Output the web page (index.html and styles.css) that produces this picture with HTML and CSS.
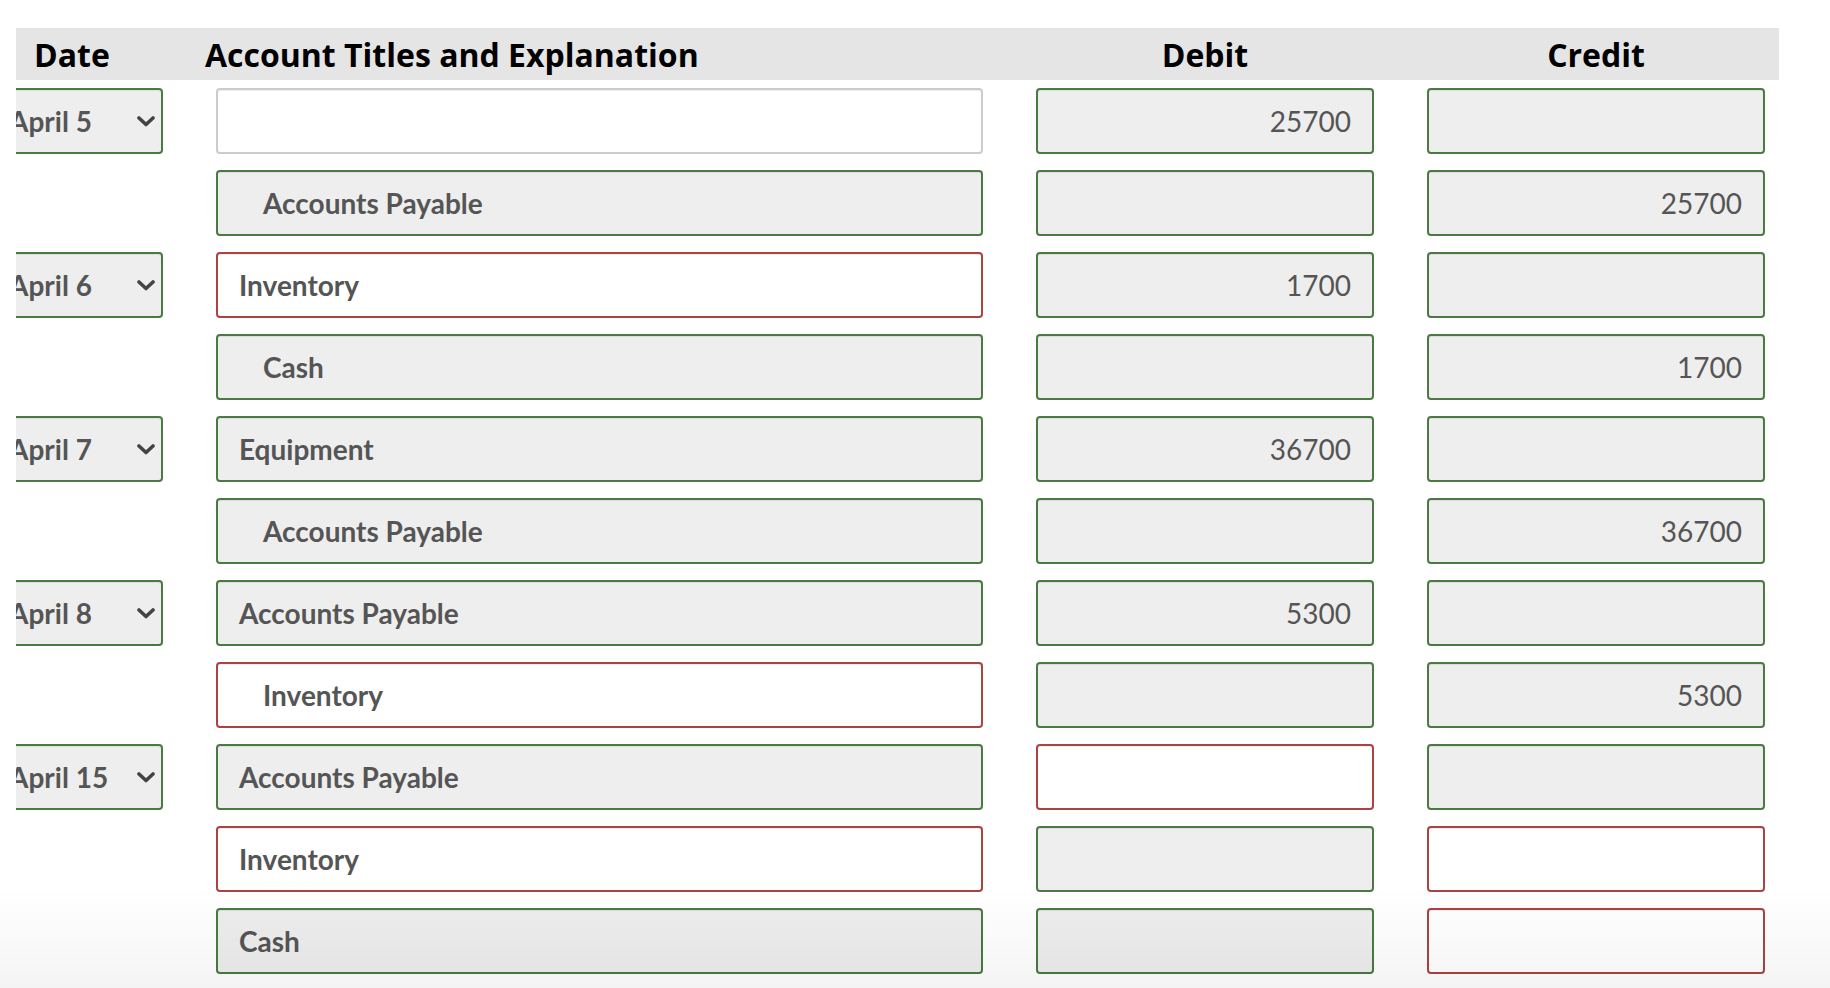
FILE: index.html
```html
<!DOCTYPE html>
<html lang="en">
<head>
<meta charset="utf-8">
<title>Journal Entries</title>
<link rel="stylesheet" href="styles.css">
</head>
<body>
<div class="page">
  <div class="journal">
    <div class="head">
      <div class="th th-date">Date</div>
      <div class="th th-account">Account Titles and Explanation</div>
      <div class="th th-center">Debit</div>
      <div class="th th-center">Credit</div>
    </div>

    <div class="rows">
      <!-- April 5 -->
      <div class="row">
        <div class="date-clip"><div class="select ok"><span>April 5</span><svg class="chev" viewBox="0 0 18 11"><polyline points="2,2 9,8.5 16,2"/></svg></div></div>
        <div class="field plain"></div>
        <div class="field ok num">25700</div>
        <div class="field ok num"></div>
      </div>
      <div class="row">
        <div></div>
        <div class="field ok indent">Accounts Payable</div>
        <div class="field ok num"></div>
        <div class="field ok num">25700</div>
      </div>

      <!-- April 6 -->
      <div class="row">
        <div class="date-clip"><div class="select ok"><span>April 6</span><svg class="chev" viewBox="0 0 18 11"><polyline points="2,2 9,8.5 16,2"/></svg></div></div>
        <div class="field bad">Inventory</div>
        <div class="field ok num">1700</div>
        <div class="field ok num"></div>
      </div>
      <div class="row">
        <div></div>
        <div class="field ok indent">Cash</div>
        <div class="field ok num"></div>
        <div class="field ok num">1700</div>
      </div>

      <!-- April 7 -->
      <div class="row">
        <div class="date-clip"><div class="select ok"><span>April 7</span><svg class="chev" viewBox="0 0 18 11"><polyline points="2,2 9,8.5 16,2"/></svg></div></div>
        <div class="field ok">Equipment</div>
        <div class="field ok num">36700</div>
        <div class="field ok num"></div>
      </div>
      <div class="row">
        <div></div>
        <div class="field ok indent">Accounts Payable</div>
        <div class="field ok num"></div>
        <div class="field ok num">36700</div>
      </div>

      <!-- April 8 -->
      <div class="row">
        <div class="date-clip"><div class="select ok"><span>April 8</span><svg class="chev" viewBox="0 0 18 11"><polyline points="2,2 9,8.5 16,2"/></svg></div></div>
        <div class="field ok">Accounts Payable</div>
        <div class="field ok num">5300</div>
        <div class="field ok num"></div>
      </div>
      <div class="row">
        <div></div>
        <div class="field bad indent">Inventory</div>
        <div class="field ok num"></div>
        <div class="field ok num">5300</div>
      </div>

      <!-- April 15 -->
      <div class="row">
        <div class="date-clip"><div class="select ok"><span>April 15</span><svg class="chev" viewBox="0 0 18 11"><polyline points="2,2 9,8.5 16,2"/></svg></div></div>
        <div class="field ok">Accounts Payable</div>
        <div class="field bad num"></div>
        <div class="field ok num"></div>
      </div>
      <div class="row">
        <div></div>
        <div class="field bad">Inventory</div>
        <div class="field ok num"></div>
        <div class="field bad num"></div>
      </div>
      <div class="row">
        <div></div>
        <div class="field ok">Cash</div>
        <div class="field ok num"></div>
        <div class="field bad num"></div>
      </div>
    </div>
  </div>
</div>
<div class="fade"></div>
</body>
</html>
```

FILE: styles.css
```css
html, body {
  margin: 0;
  padding: 0;
  background: #ffffff;
}

body {
  width: 1830px;
  height: 988px;
  overflow: hidden;
  font-family: Lato, "Open Sans", "Liberation Sans", sans-serif;
}

.page {
  padding: 28px 0 0 16px;
}

.journal {
  width: 1763px;
}

.head,
.row {
  display: grid;
  grid-template-columns: 147px 767px 338px 338px;
  column-gap: 53px;
}

.head {
  height: 52px;
  background: #e5e5e5;
  align-items: center;
  padding-right: 14px;
}

.th {
  font-family: "Open Sans", "Liberation Sans", sans-serif;
  font-weight: 700;
  font-size: 32px;
  color: #000;
  white-space: nowrap;
  line-height: 1;
  padding-top: 1px;
}

.th-date {
  padding-left: 18px;
}

.th-account {
  margin-left: -11px;
}

.th-center {
  text-align: center;
}

.rows {
  display: flex;
  flex-direction: column;
  gap: 16px;
  margin-top: 8px;
}

.row {
  height: 66px;
}

.field,
.select {
  box-sizing: border-box;
  height: 66px;
  border: 2px solid #ccc;
  border-radius: 4px;
  box-shadow: inset 0 1px 1px rgba(0, 0, 0, 0.075);
  display: flex;
  align-items: center;
  padding: 0 21px;
  font-size: 28px;
  font-weight: 700;
  color: #555;
  white-space: nowrap;
}

.field.plain {
  background: #fff;
  border-color: #cccccc;
}

.ok {
  background: #eeeeee;
  border-color: #4a7a42;
}

.bad {
  background: #ffffff;
  border-color: #a94442;
}

.indent {
  padding-left: 45px;
}

.num {
  justify-content: flex-end;
  font-weight: 400;
  padding-right: 21px;
}

.date-clip {
  overflow: hidden;
  height: 66px;
}

.select {
  width: 168px;
  margin-left: -21px;
  padding: 0 6px 0 12px;
  justify-content: space-between;
  font-weight: 700;
}

.chev {
  width: 18px;
  height: 11px;
  fill: none;
  stroke: #444;
  stroke-width: 3.6;
  stroke-linecap: round;
  stroke-linejoin: round;
}

.fade {
  position: fixed;
  left: 0;
  right: 0;
  bottom: 0;
  height: 100px;
  pointer-events: none;
  background: linear-gradient(to bottom, rgba(0, 0, 0, 0), rgba(0, 0, 0, 0.045));
}
```
